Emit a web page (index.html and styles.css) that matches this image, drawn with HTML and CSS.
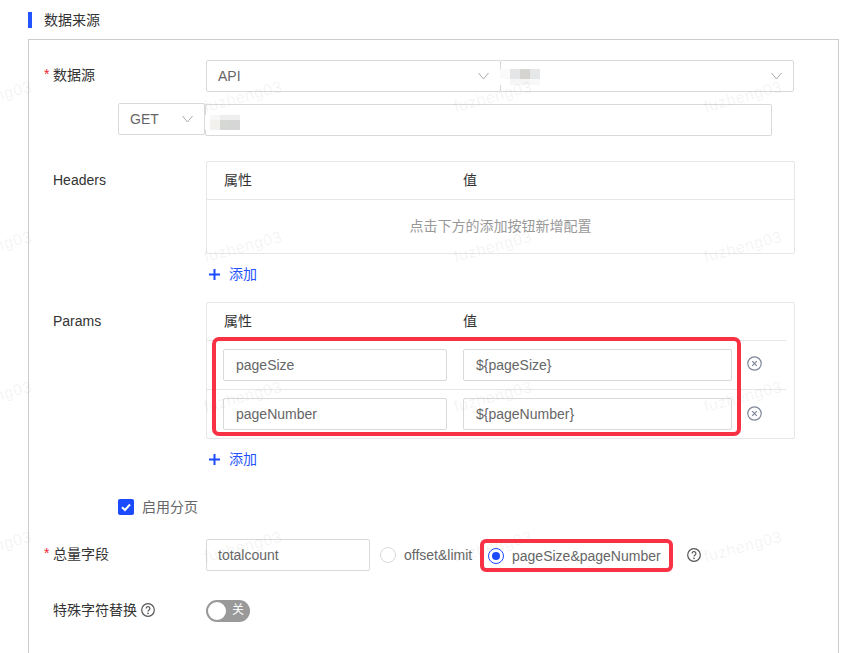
FILE: index.html
```html
<!DOCTYPE html>
<html lang="zh">
<head>
<meta charset="utf-8">
<title>数据来源</title>
<link rel="stylesheet" href="styles.css">
</head>
<body>
<div class="page">
  <div class="section-title"><span class="marker"></span><span class="cjk">数据来源</span></div>
  <div class="panel">
    <div class="row row-source">
      <div class="label label-cjk"><span class="star">*</span>数据源</div>
      <div class="select-group">
        <div class="select select-half"><span>API</span><svg class="chev" viewBox="0 0 11 8"><path d="M.5 1l5 6 5-6"/></svg></div>
        <div class="select select-half select-joined"><span class="blur blur-a"><i></i><i></i><i></i><i></i><i></i><i></i><i></i><i></i></span><span></span><svg class="chev" viewBox="0 0 11 8"><path d="M.5 1l5 6 5-6"/></svg></div>
      </div>
    </div>
    <div class="row-url">
      <div class="select select-method"><span>GET</span><svg class="chev" viewBox="0 0 11 8"><path d="M.5 1l5 6 5-6"/></svg></div>
      <div class="input input-url"><span class="blur blur-b"><i></i><i></i><i></i><i></i><i></i><i></i><i></i><i></i></span></div>
    </div>

    <div class="row row-headers">
      <div class="label label-table">Headers</div>
      <div class="field">
        <div class="table">
          <div class="thead"><span class="col-a">属性</span><span>值</span></div>
          <div class="empty">点击下方的添加按钮新增配置</div>
        </div>
        <div class="add"><svg class="plus" viewBox="0 0 11 11"><path d="M5.5 0v11M0 5.5h11"/></svg><span class="cjk">添加</span></div>
      </div>
    </div>

    <div class="row row-params">
      <div class="label label-table">Params</div>
      <div class="field">
        <div class="table table-params">
          <div class="thead thead-params"><span class="col-a">属性</span><span>值</span></div>
          <div class="param-row">
            <div class="input input-key">pageSize</div>
            <div class="input input-val">${pageSize}</div>
            <svg class="remove" viewBox="0 0 15 15"><circle cx="7.5" cy="7.5" r="6.7"/><path d="M5.2 5.2l4.6 4.6M9.8 5.2l-4.6 4.6"/></svg>
          </div>
          <div class="param-row param-row-last">
            <div class="input input-key">pageNumber</div>
            <div class="input input-val">${pageNumber}</div>
            <svg class="remove" viewBox="0 0 15 15"><circle cx="7.5" cy="7.5" r="6.7"/><path d="M5.2 5.2l4.6 4.6M9.8 5.2l-4.6 4.6"/></svg>
          </div>
          <div class="mark mark-params"></div>
        </div>
        <div class="add"><svg class="plus" viewBox="0 0 11 11"><path d="M5.5 0v11M0 5.5h11"/></svg><span class="cjk">添加</span></div>
      </div>
    </div>

    <div class="row-check">
      <span class="checkbox"><svg viewBox="0 0 16 16"><path d="M4 8.2l3 2.8 5-5.5"/></svg></span>
      <span class="cjk">启用分页</span>
    </div>

    <div class="row row-total">
      <div class="label label-cjk"><span class="star">*</span>总量字段</div>
      <div class="input input-total">totalcount</div>
      <div class="radio-item radio-plain"><span class="radio"></span><span>offset&amp;limit</span></div>
      <div class="radio-item radio-marked"><span class="radio radio-on"></span><span>pageSize&amp;pageNumber</span></div>
      <svg class="help help-total" viewBox="0 0 14 14"><circle cx="7" cy="7" r="6.3"/><path d="M5.1 5.5a1.9 1.9 0 1 1 2.9 1.6c-.7.4-1 .7-1 1.5"/><circle class="dot" cx="7" cy="10.4" r=".8"/></svg>
    </div>

    <div class="row row-special">
      <div class="label label-plain label-cjk label-help">特殊字符替换<svg class="help help-inline" viewBox="0 0 14 14"><circle cx="7" cy="7" r="6.3"/><path d="M5.1 5.5a1.9 1.9 0 1 1 2.9 1.6c-.7.4-1 .7-1 1.5"/><circle class="dot" cx="7" cy="10.4" r=".8"/></svg></div>
      <div class="switch"><span class="knob"></span><span class="switch-text">关</span></div>
    </div>
  </div>

  <div class="watermarks" aria-hidden="true">
    <span>fuzheng03</span><span>fuzheng03</span><span>fuzheng03</span><span>fuzheng03</span>
    <span>fuzheng03</span><span>fuzheng03</span><span>fuzheng03</span><span>fuzheng03</span>
    <span>fuzheng03</span><span>fuzheng03</span><span>fuzheng03</span><span>fuzheng03</span>
    <span>fuzheng03</span><span>fuzheng03</span><span>fuzheng03</span><span>fuzheng03</span>
  </div>
</div>
</body>
</html>
```
FILE: styles.css
```css
* { box-sizing: border-box; }
html, body { margin: 0; padding: 0; height: 100%; overflow: hidden; background: #fff; }
body {
  font-family: "Liberation Sans", "Noto Sans CJK SC", sans-serif;
  font-size: 14px;
  color: #333;
}
.page { position: relative; width: 847px; height: 653px; overflow: hidden; padding: 12px 0 0 28px; }
.cjk { padding-bottom: 3px; }
.section-title { display: flex; align-items: center; height: 16px; gap: 12px; color: #333; }
.marker { width: 4px; height: 16px; background: #2454ff; }
.panel {
  width: 811px; height: 640px; margin-top: 11px;
  border: 1px solid #ccc;
  padding: 20px 0 0 15px;
}
.row { display: flex; }
.label { width: 162px; flex: none; height: 32px; display: flex; align-items: center; }
.label-cjk { padding-bottom: 4px; }
.label-plain { padding-left: 9px; }
.label-table { height: 38px; padding-left: 9px; }
.star { color: #f5222d; width: 9px; font-size: 14px; flex: none; }
.select-group { display: flex; }
.select, .input {
  position: relative; height: 32px; border: 1px solid #d9d9d9; border-radius: 2px; background: #fff;
  color: #666; display: flex; align-items: center; padding-left: 11px;
}
.select { justify-content: space-between; padding-right: 11px; }
.chev { width: 11px; height: 8px; fill: none; stroke: #aaa; stroke-width: 1; }
.select-half { width: 295px; }
.select-joined { width: 294px; margin-left: -1px; }
.blur { position: absolute; display: grid; }
.blur-a { left: -1px; top: 8px; grid-template-columns: repeat(4, 10px); grid-template-rows: 10px 6px; }
.blur-a i:nth-child(1) { background: #fafafa; }
.blur-a i:nth-child(2) { background: #e4e5e6; }
.blur-a i:nth-child(3) { background: #d5d4d1; }
.blur-a i:nth-child(4) { background: #e6e7e8; }
.blur-a i:nth-child(5) { background: #fff; }
.blur-a i:nth-child(6) { background: #f6f6f6; }
.blur-a i:nth-child(7) { background: #f6f6f6; }
.blur-a i:nth-child(8) { background: #f8f8f8; }
.row-url { display: flex; margin: 11px 0 0 74px; height: 32px; }
.select-method { width: 87px; }
.input-url { width: 567px; margin-top: 1px; }
.blur-b { left: -1px; top: 10px; grid-template-columns: 5px repeat(3, 10px); grid-template-rows: 5px 10px; }
.blur-b i:nth-child(1) { background: #fff; }
.blur-b i:nth-child(2) { background: #f7f7f7; }
.blur-b i:nth-child(3) { background: #eeeeee; }
.blur-b i:nth-child(4) { background: #eeeeee; }
.blur-b i:nth-child(5) { background: #fff; }
.blur-b i:nth-child(6) { background: #f3f1ee; }
.blur-b i:nth-child(7) { background: #d5d8d5; }
.blur-b i:nth-child(8) { background: #d6d6d6; }
.row-headers { margin-top: 26px; }
.field { width: 589px; flex: none; }
.table { position: relative; width: 589px; border: 1px solid #e6e6e6; border-radius: 2px; }
.thead { display: flex; align-items: center; height: 38px; padding: 0 0 3px 17px; color: #333; border-bottom: 1px solid #e6e6e6; }
.col-a { width: 239px; }
.empty { height: 53px; display: flex; align-items: center; justify-content: center; color: #999; padding-bottom: 3px; }
.add { display: flex; align-items: center; gap: 9px; height: 20px; margin: 10px 0 0 3px; color: #2454ff; }
.plus { width: 11px; height: 11px; fill: none; stroke: #1c4bff; stroke-width: 2; flex: none; }
.row-params { margin-top: 18px; }
.table-params { height: 137px; }
.thead-params { margin-right: 8px; }
.param-row { display: flex; align-items: center; height: 49px; padding: 0 0 1px 16px; margin-right: 8px; border-bottom: 1px solid #e6e6e6; }
.param-row-last { border-bottom: 0; padding-bottom: 0; height: 48px; }
.input-key { width: 224px; padding-left: 12px; }
.input-val { width: 269px; margin-left: 16px; padding-left: 12px; }
.remove { width: 15px; height: 15px; margin: 0 0 2px 15px; fill: none; stroke: #7f8699; stroke-width: 1.2; flex: none; }
.mark { position: absolute; border: 4px solid #f93145; border-radius: 7px; pointer-events: none; }
.mark-params { left: 5px; top: 34px; width: 529px; height: 99px; }
.row-check { display: flex; align-items: center; gap: 8px; margin: 30px 0 0 74px; height: 16px; color: #666; }
.checkbox { width: 16px; height: 16px; background: #1c4bff; border-radius: 2px; display: block; }
.checkbox svg { display: block; fill: none; stroke: #fff; stroke-width: 2; }
.row-total { margin-top: 24px; align-items: center; height: 32px; }
.input-total { width: 164px; }
.radio-item { display: flex; align-items: center; gap: 8px; color: #666; height: 32px; }
.radio-plain { width: 92px; margin-left: 10px; }
.radio-marked {
  margin-left: 8px; width: 193px; height: 33px; align-self: flex-start;
  border: 4px solid #f93145; border-radius: 6px; padding-left: 4px;
}
.radio { width: 16px; height: 16px; border: 1px solid #d9d9d9; border-radius: 50%; display: block; flex: none; }
.radio-on { border-color: #1c4bff; position: relative; }
.radio-on::after { content: ""; position: absolute; left: 3px; top: 3px; width: 8px; height: 8px; border-radius: 50%; background: #1c4bff; }
.help { width: 14px; height: 14px; fill: none; stroke: #555; stroke-width: 1.2; flex: none; }
.help .dot { fill: #555; stroke: none; }
.help-total { margin-left: 14px; }
.help-inline { margin-top: 2px; }
.row-special { margin-top: 24px; align-items: center; height: 32px; }
.label-help { gap: 4px; }
.switch { position: relative; width: 44px; height: 22px; border-radius: 11px; background: #999; }
.knob { position: absolute; left: 2px; top: 2px; width: 18px; height: 18px; border-radius: 50%; background: #fff; }
.switch-text { position: absolute; left: 26px; top: -1px; line-height: 22px; font-size: 12px; color: #fff; }
.watermarks {
  position: absolute; left: -47px; top: 82px; display: grid;
  grid-template-columns: repeat(4, 250px); grid-auto-rows: 150px;
  pointer-events: none;
}
.watermarks span {
  display: block; width: 80px; height: 30px; line-height: 30px; font-size: 16px; letter-spacing: .6px;
  color: rgba(120, 120, 120, .09); transform: rotate(-15deg);
  white-space: nowrap;
}
```
